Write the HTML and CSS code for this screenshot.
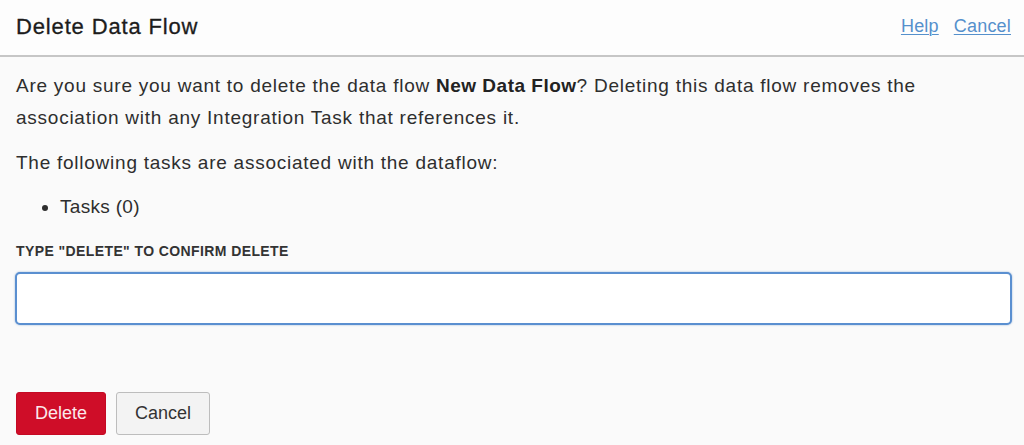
FILE: index.html
```html
<!DOCTYPE html>
<html lang="en">
<head>
<meta charset="utf-8">
<title>Delete Data Flow</title>
<link rel="stylesheet" href="styles.css">
</head>
<body>
<div class="dialog">
  <header class="dialog-header">
    <h1 class="dialog-title">Delete Data Flow</h1>
    <nav class="header-links">
      <a href="#" class="header-link">Help</a>
      <a href="#" class="header-link">Cancel</a>
    </nav>
  </header>
  <main class="dialog-body">
    <p class="para">Are you sure you want to delete the data flow <strong>New Data Flow</strong>? Deleting this data flow removes the association with any Integration Task that references it.</p>
    <p class="para para-second">The following tasks are associated with the dataflow:</p>
    <ul class="task-list">
      <li>Tasks (0)</li>
    </ul>
    <label class="confirm-label" for="confirm">TYPE "DELETE" TO CONFIRM DELETE</label>
    <input id="confirm" class="confirm-input" type="text">
    <div class="actions">
      <button class="btn btn-danger" type="button">Delete</button>
      <button class="btn btn-default" type="button">Cancel</button>
    </div>
  </main>
</div>
</body>
</html>
```

FILE: styles.css
```css
html, body {
  margin: 0;
  padding: 0;
  background: #fafafa;
}

body {
  font-family: "Liberation Sans", Helvetica, Arial, sans-serif;
  color: #2e2e2e;
}

.dialog {
  width: 1024px;
  height: 445px;
  overflow: hidden;
}

.dialog-header {
  height: 55px;
  display: flex;
  align-items: center;
  justify-content: space-between;
  padding: 0 13px 0 16px;
  background: #fdfdfd;
  border-bottom: 2px solid #c6c6c6;
}

.dialog-title {
  margin: 0;
  font-size: 22px;
  font-weight: 400;
  color: #1c1c1c;
  letter-spacing: 0.85px;
  -webkit-text-stroke: 0.3px #1c1c1c;
  position: relative;
  top: -1px;
}

.header-links {
  display: flex;
  gap: 15px;
  position: relative;
  top: -1px;
}

.header-link {
  font-size: 18px;
  letter-spacing: 0.2px;
  color: #5590cc;
  text-decoration: underline;
  text-underline-offset: 2px;
  text-decoration-thickness: 1px;
}

.dialog-body {
  padding: 13px 16px 0 16px;
}

.para {
  margin: 0;
  font-size: 19px;
  letter-spacing: 0.75px;
  line-height: 32px;
}

.para strong {
  font-weight: 700;
  color: #222;
  letter-spacing: 0.5px;
}

.para-second {
  margin-top: 13px;
}

.task-list {
  margin: 12px 0 0 0;
  padding-left: 44px;
  font-size: 19px;
  letter-spacing: 0.3px;
  line-height: 32px;
}

.confirm-label {
  display: block;
  margin-top: 20px;
  font-size: 14px;
  letter-spacing: 0.4px;
  line-height: 16px;
  font-weight: 700;
  color: #333;
}

.confirm-input {
  display: block;
  box-sizing: border-box;
  width: 997px;
  height: 53px;
  margin: 13px 0 0 -1px;
  border: 2px solid #5a8fd0;
  border-radius: 5px;
  background: #fff;
  box-shadow: 0 0 2px rgba(74, 127, 193, 0.6);
  outline: none;
}

.actions {
  display: flex;
  gap: 10px;
  margin-top: 67px;
}

.btn {
  box-sizing: border-box;
  height: 43px;
  padding: 0 18px;
  font-family: inherit;
  font-size: 18px;
  border-radius: 3px;
  cursor: pointer;
}

.btn-danger {
  background: #cf0d28;
  border: 1px solid #c40a24;
  color: #fbe8eb;
}

.btn-default {
  background: #f3f3f3;
  border: 1px solid #bdbdbd;
  color: #333;
}
```
